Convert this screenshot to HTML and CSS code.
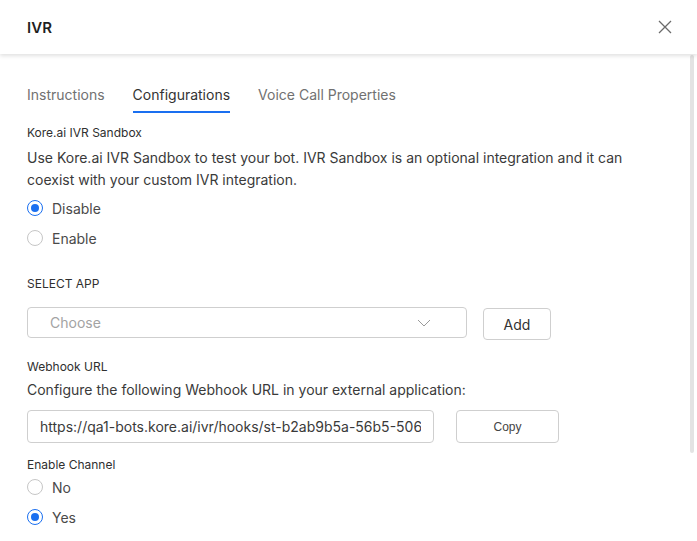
FILE: index.html
```html
<!DOCTYPE html>
<html>
<head>
<meta charset="utf-8">
<link rel="stylesheet" href="styles.css">
</head>
<body>
<div class="dialog">
  <header class="header">
    <h1 class="title">IVR</h1>
    <svg class="close" width="14" height="14" viewBox="0 0 14 14"><path d="M1 1L13 13M13 1L1 13" stroke="#6b6b6b" stroke-width="1.3" fill="none"/></svg>
  </header>
  <div class="body">
    <nav class="tabs">
      <span class="tab">Instructions</span>
      <span class="tab active">Configurations</span>
      <span class="tab">Voice Call Properties</span>
    </nav>
    <div class="label first">Kore.ai IVR Sandbox</div>
    <p class="desc">Use Kore.ai IVR Sandbox to test your bot. IVR Sandbox is an optional integration and it can coexist with your custom IVR integration.</p>
    <div class="radios">
      <div class="radio-row"><span class="radio checked"></span><span>Disable</span></div>
      <div class="radio-row"><span class="radio"></span><span>Enable</span></div>
    </div>
    <div class="label upper">SELECT APP</div>
    <div class="field-row select-row">
      <div class="select">
        <span class="placeholder">Choose</span>
        <svg class="chev" width="14" height="8" viewBox="0 0 14 8"><path d="M1 1L7 7L13 1" stroke="#9a9a9a" stroke-width="1" fill="none"/></svg>
      </div>
      <button class="btn add">Add</button>
    </div>
    <div class="label webhook">Webhook URL</div>
    <p class="desc single">Configure the following Webhook URL in your external application:</p>
    <div class="field-row url-row">
      <input class="url" type="text" readonly value="https://qa1-bots.kore.ai/ivr/hooks/st-b2ab9b5a-56b5-5066-a4b1-6e2f1c9d8a7b">
      <button class="btn copy">Copy</button>
    </div>
    <div class="label channel">Enable Channel</div>
    <div class="radios tight">
      <div class="radio-row"><span class="radio"></span><span>No</span></div>
      <div class="radio-row"><span class="radio checked"></span><span>Yes</span></div>
    </div>
  </div>
  <div class="scroll-thumb"></div>
</div>
</body>
</html>
```

FILE: styles.css
```css
* { box-sizing: border-box; }
html, body { margin: 0; padding: 0; background: #fff; }
body {
  font-family: Inter, "Noto Sans", sans-serif;
  color: #3a3a3a;
  width: 697px;
  height: 541px;
  overflow: hidden;
}
.dialog { position: relative; width: 697px; height: 541px; overflow: hidden; }
.header {
  height: 54px;
  display: flex;
  align-items: center;
  justify-content: space-between;
  padding: 0 25px 0 27px;
  box-shadow: 0 2px 4px rgba(0,0,0,0.12);
  position: relative;
  z-index: 2;
  background: #fff;
}
.title { margin: 0; font-size: 15px; font-weight: 600; color: #1f1f1f; letter-spacing: 0.1px; }
.close { display: block; }
.body { padding: 31px 27px 0 27px; }
.tabs { display: flex; gap: 28px; }
.tab {
  font-size: 14px;
  line-height: 20px;
  color: #717171;
  padding-bottom: 6px;
  border-bottom: 2px solid transparent;
}
.tab.active { color: #333; border-bottom-color: #1a6ff0; }
.label { font-size: 12px; line-height: 16px; color: #2f2f2f; font-weight: 400; }
.label.first { margin-top: 12px; }
.label.upper { margin-top: 26px; }
.label.webhook { margin-top: 19px; }
.label.channel { margin-top: 14px; }
.desc { margin: 6px 0 0; font-size: 14px; line-height: 22px; color: #3a3a3a; max-width: 640px; }
.desc.single { margin-top: 4px; }
.radios { margin-top: 5px; display: flex; flex-direction: column; gap: 6px; }
.radios.tight { margin-top: 2px; }
.radio-row { display: flex; align-items: center; gap: 9px; height: 24px; font-size: 14px; color: #4a4a4a; }
.radio {
  width: 16px; height: 16px; border-radius: 50%;
  border: 1px solid #c6c6c6; background: #fff; position: relative; flex: none;
}
.radio.checked { border: 1.5px solid #1a6ff0; }
.radio.checked::after {
  content: ""; position: absolute; left: 50%; top: 50%;
  width: 8px; height: 8px; margin: -4px 0 0 -4px; border-radius: 50%; background: #1a6ff0;
}
.field-row { display: flex; align-items: flex-start; }
.select-row { margin-top: 15px; gap: 16px; }
.select {
  width: 440px; height: 31px; border: 1px solid #cfcfcf; border-radius: 4px;
  display: flex; align-items: center; justify-content: space-between;
  padding: 0 35px 0 22px;
}
.placeholder { font-size: 14px; color: #a3a3a3; }
.chev { display: block; }
.btn {
  font-family: Inter, "Noto Sans", sans-serif;
  background: #fff; border: 1px solid #cfcfcf; border-radius: 4px; color: #333;
  cursor: pointer; padding: 0;
}
.btn.add { width: 68px; height: 32px; margin-top: 1px; font-size: 14px; }
.url-row { margin-top: 9px; gap: 22px; }
.url {
  width: 407px; height: 33px; border: 1px solid #cfcfcf; border-radius: 4px;
  padding: 0 12px; font-family: Inter, "Noto Sans", sans-serif; font-size: 14px; color: #3a3a3a;
  outline: none; background: #fff;
}
.btn.copy { width: 103px; height: 33px; font-family: "Liberation Sans", Arial, sans-serif; font-size: 12px; color: #444; }
.scroll-thumb {
  position: absolute; left: 690px; top: 55px; width: 4px; height: 398px;
  background: #e3e3e3; border-radius: 2px;
}
```
